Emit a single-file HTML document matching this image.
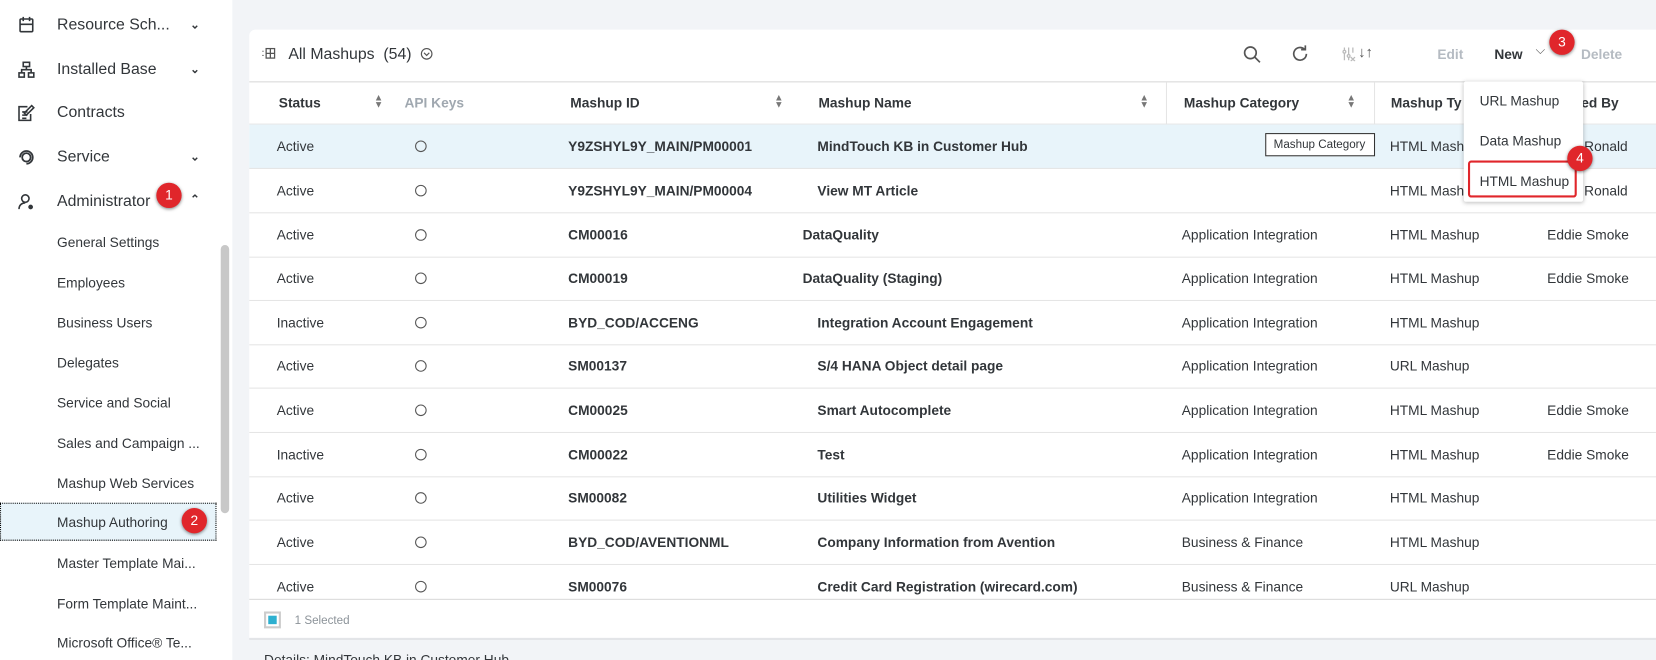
<!DOCTYPE html>
<html><head><meta charset="utf-8"><style>
*{box-sizing:border-box;margin:0;padding:0}
html,body{width:1656px;height:660px;overflow:hidden}
body{background:#f2f4f7;font-family:"Liberation Sans",sans-serif;color:#32363a;position:relative}
#w{position:absolute;left:0;top:0;width:1568px;height:625px;overflow:hidden;transform:scale(1.0561);transform-origin:0 0}
.a{position:absolute;white-space:nowrap}
#side{position:absolute;left:0;top:0;width:220px;height:625px;background:#fff}
.nav{font-size:15px;color:#32363a}
.sub{font-size:13px;color:#32363a;left:54px}
.chev{font-size:11px;font-weight:bold;left:180px}
.badge{position:absolute;width:24px;height:24px;border-radius:50%;background:#e0262b;color:#fff;font-size:13px;text-align:center;line-height:24px;box-shadow:0 1px 3px rgba(0,0,0,.5)}
#card{position:absolute;left:236px;top:28px;width:1340px;height:576px;background:#fff;border-radius:6px 0 0 0}
.hd{font-size:13px;font-weight:bold;color:#32363a}
.row{position:absolute;left:236px;width:1340px;height:42px;border-bottom:1px solid #e5e5e5;font-size:13px}
.row span{position:absolute;top:13px;white-space:nowrap}
.c{width:11px;height:11px;border:1.3px solid #555;border-radius:50%;top:15px!important;left:157px}
.b{font-weight:bold}
</style></head><body><div id="w">
<div id="side">
<svg class="a" style="left:16px;top:15px" width="18" height="18" viewBox="0 0 18 18" fill="none" stroke="#32363a" stroke-width="1.5"><rect x="3" y="3" width="12" height="12" rx="1"/><path d="M3 8h12M6 1v4M12 1v4"/></svg>
<div class="a nav" style="left:54px;top:15px">Resource Sch...</div><div class="a chev" style="top:17px">⌄</div>
<svg class="a" style="left:16px;top:57px" width="18" height="18" viewBox="0 0 18 18" fill="none" stroke="#32363a" stroke-width="1.5"><rect x="6" y="2" width="6" height="4"/><rect x="2" y="12" width="5" height="4"/><rect x="11" y="12" width="5" height="4"/><path d="M9 6v3M4.5 12V9h9v3"/></svg>
<div class="a nav" style="left:54px;top:57px">Installed Base</div><div class="a chev" style="top:59px">⌄</div>
<svg class="a" style="left:16px;top:98px" width="18" height="18" viewBox="0 0 18 18" fill="none" stroke="#32363a" stroke-width="1.5"><path d="M13 10v6H2V3h8M5 8h5M5 11h5M5 14h4M9 11l7-7-2-2-7 7z"/></svg>
<div class="a nav" style="left:54px;top:98px">Contracts</div>
<svg class="a" style="left:16px;top:140px" width="18" height="18" viewBox="0 0 18 18" fill="none" stroke="#32363a" stroke-width="1.7"><circle cx="9" cy="9" r="4"/><path d="M3 9a6 6 0 0 1 12 0M9 15a6 6 0 0 0 6-6"/></svg>
<div class="a nav" style="left:54px;top:140px">Service</div><div class="a chev" style="top:142px">⌄</div>
<svg class="a" style="left:16px;top:182px" width="18" height="18" viewBox="0 0 18 18" fill="none" stroke="#32363a" stroke-width="1.5"><circle cx="8" cy="6" r="3.5"/><path d="M2 16c0-4 3-6 6-6"/><circle cx="13" cy="14" r="1.5" fill="#32363a"/></svg>
<div class="a nav" style="left:54px;top:182px">Administrator</div><div class="a chev" style="top:182px">⌃</div>
<div class="a sub" style="top:222px">General Settings</div>
<div class="a sub" style="top:260px">Employees</div>
<div class="a sub" style="top:298px">Business Users</div>
<div class="a sub" style="top:336px">Delegates</div>
<div class="a sub" style="top:374px">Service and Social</div>
<div class="a sub" style="top:412px">Sales and Campaign ...</div>
<div class="a sub" style="top:450px">Mashup Web Services</div>
<div class="a" style="left:0;top:476px;width:205px;height:36px;background:#e8f4fa;border:1px dotted #000"></div>
<div class="a sub" style="top:487px">Mashup Authoring</div>
<div class="a sub" style="top:526px">Master Template Mai...</div>
<div class="a sub" style="top:564px">Form Template Maint...</div>
<div class="a sub" style="top:601px">Microsoft Office® Te...</div>
<div class="a" style="left:209px;top:232px;width:8px;height:254px;background:#c8c8c8;border-radius:4px"></div>
</div>
<div class="badge" style="left:148px;top:173px">1</div>
<div class="badge" style="left:172px;top:481px">2</div>

<div id="card"></div>
<svg class="a" style="left:248px;top:44px" width="16" height="14" viewBox="0 0 16 14" fill="none" stroke="#555" stroke-width="1.2"><rect x="4" y="2" width="8" height="9"/><path d="M4 6.5h8M8 2v9M1 4v1M1 8v1"/></svg>
<div class="a" style="left:273px;top:43px;font-size:15px">All Mashups &nbsp;(54)</div>
<svg class="a" style="left:398px;top:45px" width="12" height="12" viewBox="0 0 12 12" fill="none" stroke="#555" stroke-width="1.1"><circle cx="6" cy="6" r="5"/><path d="M3.5 5l2.5 2.5 2.5-2.5"/></svg>
<svg class="a" style="left:1177px;top:43px" width="17" height="17" viewBox="0 0 17 17" fill="none" stroke="#555" stroke-width="1.6"><circle cx="7" cy="7" r="5.5"/><path d="M11 11l5 5"/></svg>
<svg class="a" style="left:1222px;top:42px" width="18" height="18" viewBox="0 0 18 18" fill="none" stroke="#555" stroke-width="1.6"><path d="M15 9a6 6 0 1 1-2-4.5"/><path d="M14 1v4h-4"/></svg>
<svg class="a" style="left:1270px;top:44px" width="14" height="14" viewBox="0 0 14 14" fill="none" stroke="#bbb" stroke-width="1.2"><path d="M3 1v12M7 1v12M11 1v5"/><circle cx="3" cy="5" r="1.3" fill="#fff"/><circle cx="7" cy="9" r="1.3" fill="#fff"/><path d="M9 10l4 4M13 10l-4 4"/></svg>
<div class="a" style="left:1286px;top:41px;font-size:14px;color:#555;font-weight:bold">↓↑</div>
<div class="a" style="left:1361px;top:44px;font-size:13px;color:#b5bbc2;font-weight:bold">Edit</div>
<div class="a" style="left:1415px;top:44px;font-size:13px;color:#32363a;font-weight:bold">New</div>
<div class="a" style="left:1454px;top:40px;font-size:12px;color:#555">⌵</div>
<div class="a" style="left:1497px;top:44px;font-size:13px;color:#b5bbc2;font-weight:bold">Delete</div>
<div class="a" style="left:236px;top:77px;width:1340px;height:1px;background:#d9d9d9"></div>
<div class="a" style="left:236px;top:117px;width:1340px;height:1px;background:#e5e5e5"></div>
<div class="a hd" style="left:264px;top:90px">Status</div>
<div class="a hd" style="left:383px;top:90px;color:#a0a8b0">API Keys</div>
<div class="a hd" style="left:540px;top:90px">Mashup ID</div>
<div class="a hd" style="left:775px;top:90px">Mashup Name</div>
<div class="a hd" style="left:1121px;top:90px">Mashup Category</div>
<div class="a hd" style="left:1317px;top:90px">Mashup Ty</div>
<div class="a hd" style="left:1464px;top:90px">Created By</div>
<div class="a" style="left:1104px;top:78px;width:1px;height:40px;background:#e5e5e5"></div>
<div class="a" style="left:1301px;top:78px;width:1px;height:40px;background:#e5e5e5"></div>
<div class="a" style="left:354px;top:89px;font-size:9px;line-height:7px;color:#777">▲<br>▼</div>
<div class="a" style="left:733px;top:89px;font-size:9px;line-height:7px;color:#777">▲<br>▼</div>
<div class="a" style="left:1079px;top:89px;font-size:9px;line-height:7px;color:#777">▲<br>▼</div>
<div class="a" style="left:1275px;top:89px;font-size:9px;line-height:7px;color:#777">▲<br>▼</div>

<div class="row" style="top:118px;background:#e8f4fa"><span style="left:26px">Active</span><span class="c"></span><span class="b" style="left:302px">Y9ZSHYL9Y_MAIN/PM00001</span><span class="b" style="left:538px">MindTouch KB in Customer Hub</span><span style="left:1080px">HTML Mash</span><span style="left:1264px">Ronald</span></div>
<div class="row" style="top:160px"><span style="left:26px">Active</span><span class="c"></span><span class="b" style="left:302px">Y9ZSHYL9Y_MAIN/PM00004</span><span class="b" style="left:538px">View MT Article</span><span style="left:1080px">HTML Mash</span><span style="left:1264px">Ronald</span></div>
<div class="row" style="top:202px"><span style="left:26px">Active</span><span class="c"></span><span class="b" style="left:302px">CM00016</span><span class="b" style="left:524px">DataQuality</span><span style="left:883px">Application Integration</span><span style="left:1080px">HTML Mashup</span><span style="left:1229px">Eddie Smoke</span></div>
<div class="row" style="top:243px"><span style="left:26px">Active</span><span class="c"></span><span class="b" style="left:302px">CM00019</span><span class="b" style="left:524px">DataQuality (Staging)</span><span style="left:883px">Application Integration</span><span style="left:1080px">HTML Mashup</span><span style="left:1229px">Eddie Smoke</span></div>
<div class="row" style="top:285px"><span style="left:26px">Inactive</span><span class="c"></span><span class="b" style="left:302px">BYD_COD/ACCENG</span><span class="b" style="left:538px">Integration Account Engagement</span><span style="left:883px">Application Integration</span><span style="left:1080px">HTML Mashup</span></div>
<div class="row" style="top:326px"><span style="left:26px">Active</span><span class="c"></span><span class="b" style="left:302px">SM00137</span><span class="b" style="left:538px">S/4 HANA Object detail page</span><span style="left:883px">Application Integration</span><span style="left:1080px">URL Mashup</span></div>
<div class="row" style="top:368px"><span style="left:26px">Active</span><span class="c"></span><span class="b" style="left:302px">CM00025</span><span class="b" style="left:538px">Smart Autocomplete</span><span style="left:883px">Application Integration</span><span style="left:1080px">HTML Mashup</span><span style="left:1229px">Eddie Smoke</span></div>
<div class="row" style="top:410px"><span style="left:26px">Inactive</span><span class="c"></span><span class="b" style="left:302px">CM00022</span><span class="b" style="left:538px">Test</span><span style="left:883px">Application Integration</span><span style="left:1080px">HTML Mashup</span><span style="left:1229px">Eddie Smoke</span></div>
<div class="row" style="top:451px"><span style="left:26px">Active</span><span class="c"></span><span class="b" style="left:302px">SM00082</span><span class="b" style="left:538px">Utilities Widget</span><span style="left:883px">Application Integration</span><span style="left:1080px">HTML Mashup</span></div>
<div class="row" style="top:493px"><span style="left:26px">Active</span><span class="c"></span><span class="b" style="left:302px">BYD_COD/AVENTIONML</span><span class="b" style="left:538px">Company Information from Avention</span><span style="left:883px">Business &amp; Finance</span><span style="left:1080px">HTML Mashup</span></div>
<div class="row" style="top:535px;height:33px;border-bottom:1px solid #d9d9d9;overflow:hidden"><span style="left:26px">Active</span><span class="c"></span><span class="b" style="left:302px">SM00076</span><span class="b" style="left:538px">Credit Card Registration (wirecard.com)</span><span style="left:883px">Business &amp; Finance</span><span style="left:1080px">URL Mashup</span></div>

<div class="a" style="left:250px;top:579px;width:16px;height:16px;border:2px solid #ccc;background:#fff"></div>
<div class="a" style="left:254px;top:583px;width:8px;height:8px;background:#2eb0d0"></div>
<div class="a" style="left:279px;top:582px;font-size:11px;color:#8c9399">1 Selected</div>
<div class="a" style="left:236px;top:604px;width:1340px;height:2px;background:#e3e5e8"></div>
<div class="a" style="left:250px;top:617px;font-size:13px;color:#32363a">Details: MindTouch KB in Customer Hub</div>

<div class="a" style="left:1198px;top:126px;width:104px;height:22px;border:1px solid #333;background:#fff;font-size:11px;line-height:20px;padding-left:7px">Mashup Category</div>

<div class="a" style="left:1386px;top:77px;width:113px;height:114px;background:#fff;box-shadow:0 1px 4px rgba(0,0,0,.25);border-radius:2px"></div>
<div class="a" style="left:1401px;top:88px;font-size:13px">URL Mashup</div>
<div class="a" style="left:1401px;top:126px;font-size:13px">Data Mashup</div>
<div class="a" style="left:1390px;top:152px;width:103px;height:35px;border:2px solid #e0262b;border-radius:3px"></div>
<div class="a" style="left:1401px;top:164px;font-size:13px">HTML Mashup</div>
<div class="badge" style="left:1467px;top:28px">3</div>
<div class="badge" style="left:1484px;top:138px">4</div>
</div></body></html>
